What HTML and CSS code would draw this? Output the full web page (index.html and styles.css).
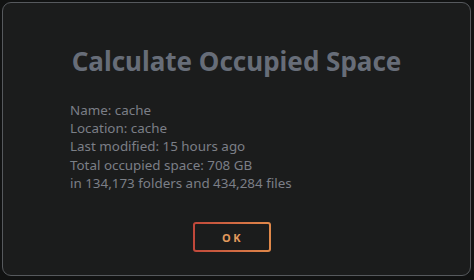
FILE: index.html
```html
<!DOCTYPE html>
<html>
<head>
<meta charset="utf-8">
<link rel="stylesheet" href="styles.css">
</head>
<body>
<div class="dialog">
  <h1 class="title">Calculate Occupied Space</h1>
  <div class="info">
    <div>Name: cache</div>
    <div>Location: cache</div>
    <div>Last modified: 15 hours ago</div>
    <div>Total occupied space: 708 GB</div>
    <div>in 134,173 folders and 434,284 files</div>
  </div>
  <div class="actions">
    <button class="ok">OK</button>
  </div>
</div>
</body>
</html>
```
FILE: styles.css
```css
html, body {
  margin: 0;
  padding: 0;
  background: #111212;
  width: 474px;
  height: 280px;
  overflow: hidden;
}
body {
  padding: 2px 3px 4px 2px;
  box-sizing: border-box;
  font-family: "Noto Sans", sans-serif;
}
.dialog {
  box-sizing: border-box;
  height: 274px;
  border: 1.5px solid #56595d;
  border-radius: 9px;
  background: #1b1c1c;
  display: flex;
  flex-direction: column;
  padding: 40px 20px 0 67px;
}
.title {
  margin: 0;
  font-size: 26px;
  font-weight: 700;
  color: #676d78;
  text-align: center;
  padding-right: 47px;
  line-height: 36px;
}
.info {
  margin-top: 22px;
  font-size: 13.4px;
  line-height: 18.2px;
  color: #7b7f87;
}
.actions {
  display: flex;
  justify-content: center;
  margin-top: 30px;
  padding-right: 57px;
}
.ok {
  width: 78px;
  height: 30px;
  box-sizing: border-box;
  border: 2px solid transparent;
  border-radius: 3px;
  background: linear-gradient(#1b1c1c, #1b1c1c) padding-box,
              linear-gradient(90deg, #c0473a, #e0894a) border-box;
  color: #e39a5c;
  font-family: "Noto Sans", sans-serif;
  font-weight: 700;
  font-size: 11px;
  letter-spacing: 2.5px;
  padding: 0 0 0 2px;
}
```
